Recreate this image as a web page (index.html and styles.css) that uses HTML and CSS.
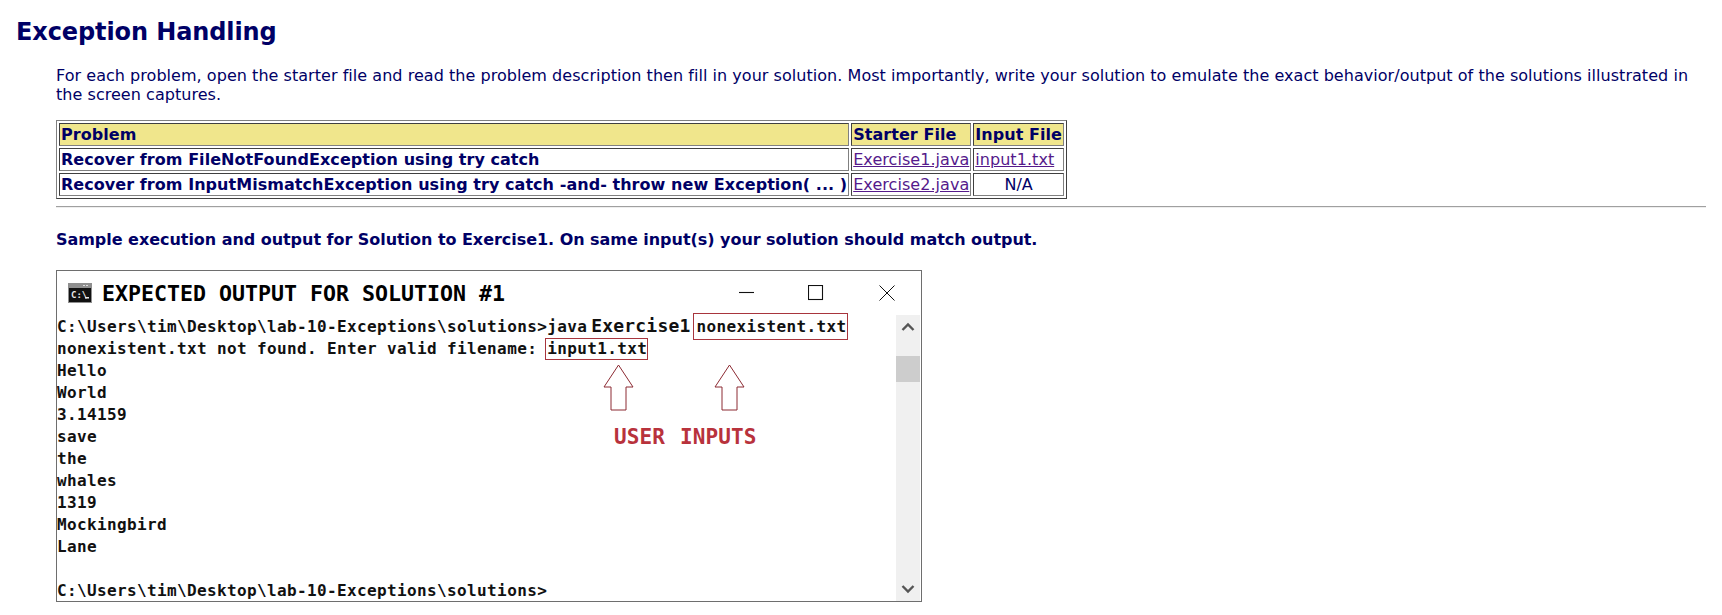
FILE: index.html
```html
<!DOCTYPE html>
<html lang="en">
<head>
<meta charset="utf-8">
<title>Exception Handling</title>
<link rel="stylesheet" href="styles.css">
</head>
<body>
<h1 class="title">Exception Handling</h1>
<main class="content">
  <p class="intro">For each problem, open the starter file and read the problem description then fill in your solution. Most importantly, write your solution to emulate the exact behavior/output of the solutions illustrated in the screen captures.</p>
  <table class="problems">
    <thead>
      <tr><th>Problem</th><th>Starter File</th><th>Input File</th></tr>
    </thead>
    <tbody>
      <tr><td class="name">Recover from FileNotFoundException using try catch</td><td><a href="#">Exercise1.java</a></td><td><a href="#">input1.txt</a></td></tr>
      <tr><td class="name">Recover from InputMismatchException using try catch -and- throw new Exception( ... )</td><td><a href="#">Exercise2.java</a></td><td class="center">N/A</td></tr>
    </tbody>
  </table>
  <hr class="rule">
  <p class="sample">Sample execution and output for Solution to Exercise1. On same input(s) your solution should match output.</p>
  <section class="window">
    <header class="titlebar">
      <svg class="cmd-icon" width="24" height="20" viewBox="0 0 24 20" aria-hidden="true">
        <rect width="24" height="20" fill="#8f8f8f"/>
        <rect x="1" y="5" width="22" height="14" fill="#111"/>
        <rect x="15" y="2" width="2" height="1" fill="#ddd"/>
        <rect x="18" y="2" width="2" height="1" fill="#ddd"/>
        <text class="cmd-glyphs" x="3" y="15">C:\</text>
        <rect x="17" y="14" width="4" height="1.500" fill="#e8e8e8"/>
      </svg>
      <span class="window-title">EXPECTED OUTPUT FOR SOLUTION #1</span>
      <div class="controls">
        <svg width="16" height="16" viewBox="0 0 16 16" aria-hidden="true"><path d="M0 7.500H15" stroke="#111" stroke-width="1.100"/></svg>
        <svg class="ctl-max" width="16" height="16" viewBox="0 0 16 16" aria-hidden="true"><rect x="0.500" y="0.500" width="14" height="14" fill="none" stroke="#111" stroke-width="1.100"/></svg>
        <svg class="ctl-close" width="16" height="16" viewBox="0 0 16 16" aria-hidden="true"><path d="M0.500 0.500L15.500 15.500M15.500 0.500L0.500 15.500" stroke="#111" stroke-width="1"/></svg>
      </div>
    </header>
    <div class="console">
      <pre class="output">C:\Users\tim\Desktop\lab-10-Exceptions\solutions&gt;java <span class="retyped">Exercise1</span> <span class="input-a">nonexistent.txt</span>
nonexistent.txt not found. Enter valid filename: <span class="input-b">input1.txt</span>
Hello
World
3.14159
save
the
whales
1319
Mockingbird
Lane

C:\Users\tim\Desktop\lab-10-Exceptions\solutions&gt;</pre>
      <div class="scrollbar">
        <svg width="24" height="24" viewBox="0 0 24 24" aria-hidden="true"><path d="M6.500 15L12 9.500L17.500 15" fill="none" stroke="#555" stroke-width="2.400"/></svg>
        <div class="thumb"></div>
        <svg class="down" width="24" height="24" viewBox="0 0 24 24" aria-hidden="true"><path d="M6.500 9L12 14.500L17.500 9" fill="none" stroke="#555" stroke-width="2.400"/></svg>
      </div>
      <svg class="arrow arrow-a" width="32" height="48" viewBox="0 0 32 48" aria-hidden="true"><path d="M15.500 1L1 23H8V46H23V23H30Z" fill="#fff" stroke="#8c2a32"/></svg>
      <svg class="arrow arrow-b" width="32" height="48" viewBox="0 0 32 48" aria-hidden="true"><path d="M15.500 1L1 23H8V46H23V23H30Z" fill="#fff" stroke="#8c2a32"/></svg>
      <span class="callout">USER INPUTS</span>
    </div>
  </section>
</main>
</body>
</html>
```
FILE: styles.css
```css
html, body {
  margin: 0;
  padding: 0;
  background: #fff;
  overflow: hidden;
}
body {
  font-family: "DejaVu Sans", Verdana, sans-serif;
  color: #000066;
  height: 615px;
}
.title {
  margin: 0;
  padding: 17px 0 0 16px;
  font-size: 24px;
  line-height: 30px;
  font-weight: bold;
  color: #000066;
  letter-spacing: -0.1px;
}
.content {
  padding: 19px 16px 0 56px;
}
.intro {
  margin: 0;
  font-size: 16px;
  line-height: 19px;
  letter-spacing: 0.04px;
}
.problems {
  margin-top: 16px;
  border-collapse: separate;
  border-spacing: 2px;
  border: 1px solid;
  border-color: #808080 #404040 #404040 #808080;
  font-size: 16px;
  line-height: 19px;
  letter-spacing: 0.05px;
}
.problems th, .problems td {
  border: 1px solid;
  border-color: #404040 #808080 #808080 #404040;
  padding: 1px;
}
.problems th {
  background: #f0e68c;
  text-align: left;
  font-weight: bold;
}
.problems .name {
  font-weight: bold;
}
.problems a {
  color: #551a8b;
}
.center {
  text-align: center;
}
.rule {
  margin: 7px 0 0 0;
  border: 0;
  border-top: 1px solid #a0a0a0;
  border-bottom: 1px solid #eee;
}
.sample {
  margin: 22px 0 0 0;
  font-size: 16px;
  line-height: 19px;
  font-weight: bold;
  letter-spacing: -0.04px;
}
.window {
  margin-top: 21px;
  width: 864px;
  height: 330px;
  border: 1px solid #6e6e6e;
  display: flex;
  flex-direction: column;
  color: #000;
  background: #fff;
}
.titlebar {
  display: flex;
  align-items: center;
  height: 44px;
  padding: 0 0 0 11px;
  flex: none;
}
.cmd-icon {
  flex: none;
}
.cmd-glyphs {
  font-family: "DejaVu Sans Mono", monospace;
  font-weight: bold;
  font-size: 9px;
  fill: #e8e8e8;
}
.window-title {
  margin-left: 10px;
  font-family: "DejaVu Sans Mono", monospace;
  font-weight: bold;
  font-size: 21.600px;
}
.controls {
  margin-left: auto;
  display: flex;
  padding-right: 26px;
}
.ctl-max {
  margin-left: 53px;
}
.ctl-close {
  margin-left: 55px;
}
.console {
  position: relative;
  flex: 1;
  display: flex;
  min-height: 0;
}
.output {
  margin: 0;
  flex: 1;
  padding: 0;
  font-family: "DejaVu Sans Mono", monospace;
  font-weight: bold;
  font-size: 16px;
  letter-spacing: 0.37px;
  line-height: 22px;
  color: #111;
}
.retyped {
  font-size: 18px;
  letter-spacing: 0.2px;
  margin: 0 -4px 0 -6px;
}
.input-a, .input-b {
  position: relative;
}
.input-a::after, .input-b::after {
  content: "";
  position: absolute;
  border: 1px solid #a8353d;
}
.input-a::after {
  left: -4px;
  right: -1px;
  top: -4px;
  bottom: -4px;
}
.input-b::after {
  left: -2px;
  right: -1px;
  top: -1px;
  bottom: -2px;
}
.scrollbar {
  flex: none;
  width: 24px;
  margin-right: 1px;
  background: #f0f0f0;
  display: flex;
  flex-direction: column;
}
.thumb {
  margin-top: 17px;
  height: 26px;
  background: #cdcdcd;
}
.down {
  margin-top: auto;
}
.arrow {
  position: absolute;
  top: 49px;
}
.arrow-a { left: 546px; }
.arrow-b { left: 657px; }
.callout {
  position: absolute;
  left: 557px;
  top: 109px;
  font-family: "DejaVu Sans Mono", monospace;
  font-weight: bold;
  font-size: 21px;
  line-height: 26px;
  letter-spacing: 0.1px;
  color: #b8323c;
  word-spacing: 2.400px;
}
```
